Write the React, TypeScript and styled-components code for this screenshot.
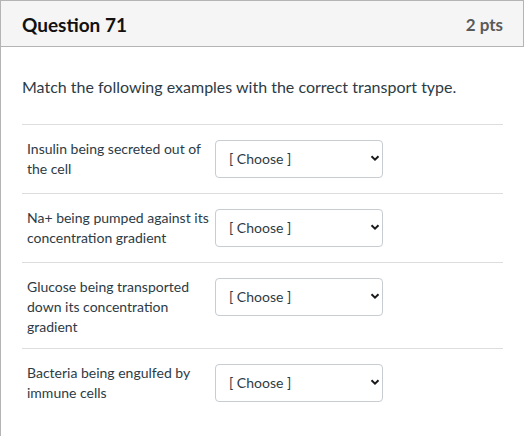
import React from "react";
import styled, { createGlobalStyle } from "styled-components";

const Global = createGlobalStyle`
  html, body { margin: 0; padding: 0; background: #fff; }
  body { font-family: Lato, "Noto Sans", sans-serif; color: #2d3b45; }
`;

const Card = styled.div`
  width: 524px;
  height: 436px;
  box-sizing: border-box;
  display: flex;
  flex-direction: column;
`;

const Header = styled.div`
  height: 47px;
  box-sizing: border-box;
  border: 1px solid #b4b4b4;
  background: #f5f5f5;
  display: flex;
  align-items: center;
  justify-content: space-between;
  padding: 0 20px 0 21px;
`;

const Title = styled.h2`
  margin: 0;
  font-size: 19px;
  font-weight: 700;
  color: #111;
  padding-top: 1px;
`;

const Points = styled.span`
  font-size: 17px;
  font-weight: 700;
  color: #5a5a5a;
  padding-top: 1px;
`;

const Body = styled.div`
  flex: 1;
  border-left: 1px solid #b4b4b4;
  padding: 28px 21px 0 21px;
`;

const Prompt = styled.p`
  margin: 0 0 25px 0;
  font-size: 16px;
  line-height: 24px;
  color: #2d3b45;
`;

const Row = styled.div`
  display: flex;
  align-items: flex-start;
  border-top: 1px solid #dddddd;
  padding: 14px 0 11px 5px;
`;

const Label = styled.div`
  flex: 0 0 188px;
  font-size: 14px;
  line-height: 20px;
  color: #2d3b45;
`;

const SelectWrap = styled.div`
  position: relative;
  width: 168px;
  height: 38px;
  margin: 1px 0 4px 0;
`;

const Select = styled.select`
  appearance: none;
  -webkit-appearance: none;
  width: 100%;
  height: 100%;
  box-sizing: border-box;
  border: 1px solid #c7cdd1;
  border-radius: 4px;
  background: #fff;
  padding: 0 24px 2px 13px;
  font-family: Lato, "Noto Sans", sans-serif;
  font-size: 14px;
  color: #2d3b45;
  outline: none;
`;

const Chevron = styled.svg`
  position: absolute;
  right: 3px;
  top: 14px;
  pointer-events: none;
`;

const items = [
  "Insulin being secreted out of the cell",
  "Na+ being pumped against its concentration gradient",
  "Glucose being transported down its concentration gradient",
  "Bacteria being engulfed by immune cells",
];

function Dropdown() {
  return (
    <SelectWrap>
      <Select defaultValue="">
        <option value="">[ Choose ]</option>
      </Select>
      <Chevron width="10" height="8" viewBox="0 0 10 8">
        <path d="M1.5 2.2 L5 5.6 L8.5 2.2" fill="none" stroke="#1a1a1a" strokeWidth="2" />
      </Chevron>
    </SelectWrap>
  );
}

export default function App() {
  return (
    <>
      <Global />
      <Card>
        <Header>
          <Title>Question 71</Title>
          <Points>2 pts</Points>
        </Header>
        <Body>
          <Prompt>Match the following examples with the correct transport type.</Prompt>
          {items.map((t) => (
            <Row key={t}>
              <Label>{t}</Label>
              <Dropdown />
            </Row>
          ))}
        </Body>
      </Card>
    </>
  );
}
